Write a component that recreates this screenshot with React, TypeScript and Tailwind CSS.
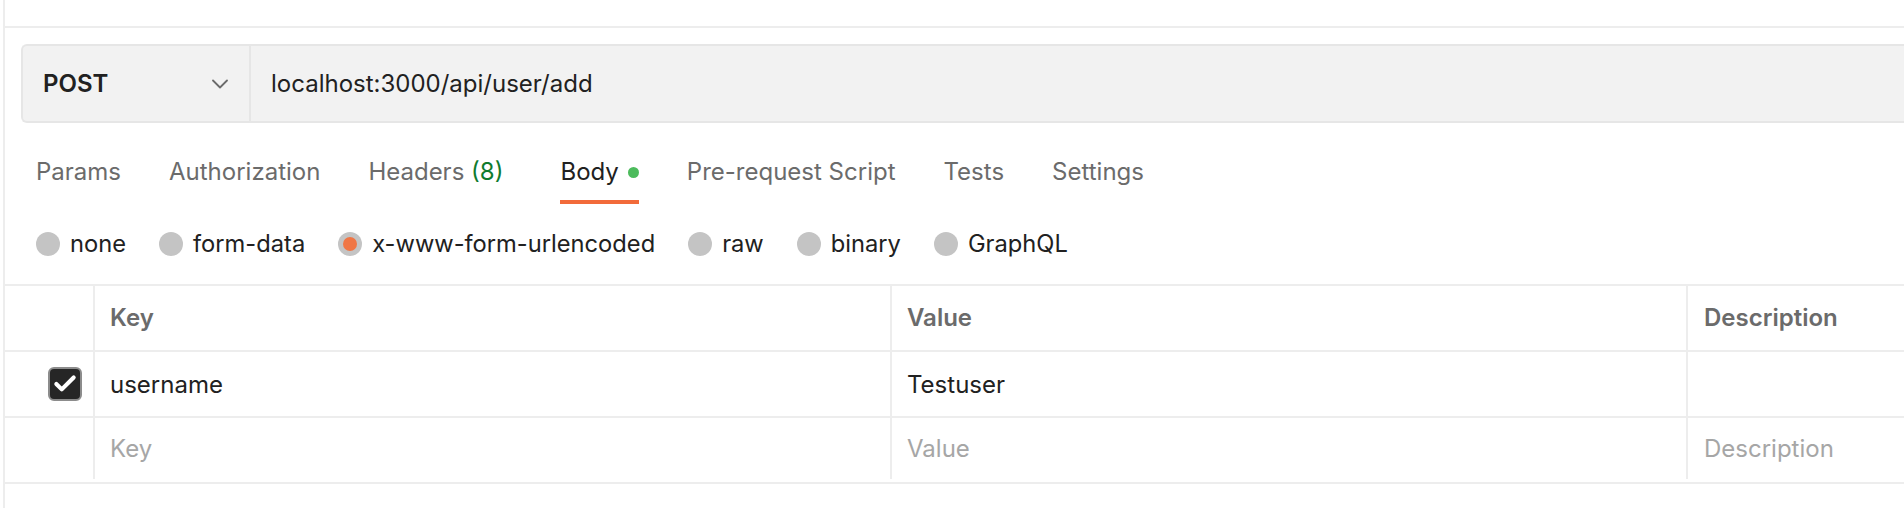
import { Check } from 'lucide-react';

const tabs = [
    { label: 'Params' },
    { label: 'Authorization' },
    { label: 'Headers', count: '(8)' },
    { label: 'Body', active: true },
    { label: 'Pre-request Script' },
    { label: 'Tests' },
    { label: 'Settings' },
];

const bodyTypes = ['none', 'form-data', 'x-www-form-urlencoded', 'raw', 'binary', 'GraphQL'];

const App = () => {
    return (
        <div className="w-[1904px] h-[508px] overflow-hidden bg-white pl-[3px] font-['Inter',sans-serif] text-[24px] text-[#212121]">
            <div className="h-full border-l-2 border-[#ededed] flex flex-col">
                <div className="h-[28px] shrink-0 border-b-2 border-[#ededed]"></div>

                {/* url bar */}
                <div className="mt-[16px] ml-[16px] h-[79px] w-[2000px] shrink-0 flex rounded-l-[6px] border-2 border-r-0 border-[#e6e6e6] bg-[#f2f2f2]">
                    <div className="w-[228px] shrink-0 flex items-center justify-between pl-[20px] pr-[21px] border-r-2 border-[#e6e6e6]">
                        <span className="font-semibold leading-[30px]">POST</span>
                        <svg width="16" height="10" viewBox="0 0 16 10" fill="none">
                            <path d="M1 1.5 L8 8.5 L15 1.5" stroke="#6b6b6b" strokeWidth="1.8" strokeLinecap="round" strokeLinejoin="round" />
                        </svg>
                    </div>
                    <div className="flex items-center pl-[20px] leading-[30px]">localhost:3000/api/user/add</div>
                </div>

                {/* tabs */}
                <div className="mt-[34px] ml-[31px] flex gap-12 shrink-0">
                    {tabs.map((t) => (
                        <div
                            key={t.label}
                            className={`flex items-start gap-[9px] pb-[13px] border-b-4 leading-[30px] ${t.active ? 'ml-[9px] border-[#f26b3a] text-[#212121]' : 'border-transparent text-[#6b6b6b]'}`}
                        >
                            <span>
                                {t.label}
                                {t.count && <span className="text-[#0f7b2e]"> {t.count}</span>}
                            </span>
                            {t.active && <span className="mt-[10px] w-[11px] h-[11px] rounded-full bg-[#4cbb5c]"></span>}
                        </div>
                    ))}
                </div>

                {/* body type radios */}
                <div className="mt-[25px] ml-[31px] flex items-center gap-[33px] shrink-0 leading-[30px] text-[23.7px]">
                    {bodyTypes.map((b) => (
                        <div key={b} className="flex items-center gap-[10px]">
                            <span className="w-[24px] h-[24px] rounded-full bg-[#c4c4c4] flex items-center justify-center">
                                {b === 'x-www-form-urlencoded' && <span className="w-[14px] h-[14px] rounded-full bg-[#f07645]"></span>}
                            </span>
                            <span>{b}</span>
                        </div>
                    ))}
                </div>

                {/* key/value table */}
                <div className="mt-[25px] border-t-2 border-[#ededed] shrink-0">
                    <div className="flex h-[66px] border-b-2 border-[#ededed]">
                        <div className="w-[90px] shrink-0 border-r-2 border-[#ededed]"></div>
                        <div className="w-[797px] shrink-0 border-r-2 border-[#ededed] flex items-center pl-[15px] font-semibold text-[#6b6b6b]">Key</div>
                        <div className="w-[796px] shrink-0 border-r-2 border-[#ededed] flex items-center pl-[15px] font-semibold text-[#6b6b6b]">Value</div>
                        <div className="flex-1 flex items-center pl-[16px] font-semibold text-[#6b6b6b]">Description</div>
                    </div>
                    <div className="flex h-[66px] border-b-2 border-[#ededed]">
                        <div className="w-[90px] shrink-0 border-r-2 border-[#ededed] flex items-center pl-[43px]">
                            <span className="w-[34px] h-[34px] rounded-[6px] bg-[#262626] border-2 border-[#8c8c8c] flex items-center justify-center">
                                <Check size={26} strokeWidth={3.8} className="text-white" />
                            </span>
                        </div>
                        <div className="w-[797px] shrink-0 border-r-2 border-[#ededed] flex items-center pl-[15px] pt-[2px]">username</div>
                        <div className="w-[796px] shrink-0 border-r-2 border-[#ededed] flex items-center pl-[15px] pt-[2px]">Testuser</div>
                        <div className="flex-1"></div>
                    </div>
                    <div className="flex h-[66px] border-b-2 border-[#ededed] pb-[3px]">
                        <div className="w-[90px] shrink-0 border-r-2 border-[#ededed]"></div>
                        <div className="w-[797px] shrink-0 border-r-2 border-[#ededed] flex items-center pl-[15px] text-[#a6a6a6]">Key</div>
                        <div className="w-[796px] shrink-0 border-r-2 border-[#ededed] flex items-center pl-[15px] text-[#a6a6a6]">Value</div>
                        <div className="flex-1 flex items-center pl-[16px] text-[#a6a6a6]">Description</div>
                    </div>
                </div>
            </div>
        </div>
    );
};

export default App;
